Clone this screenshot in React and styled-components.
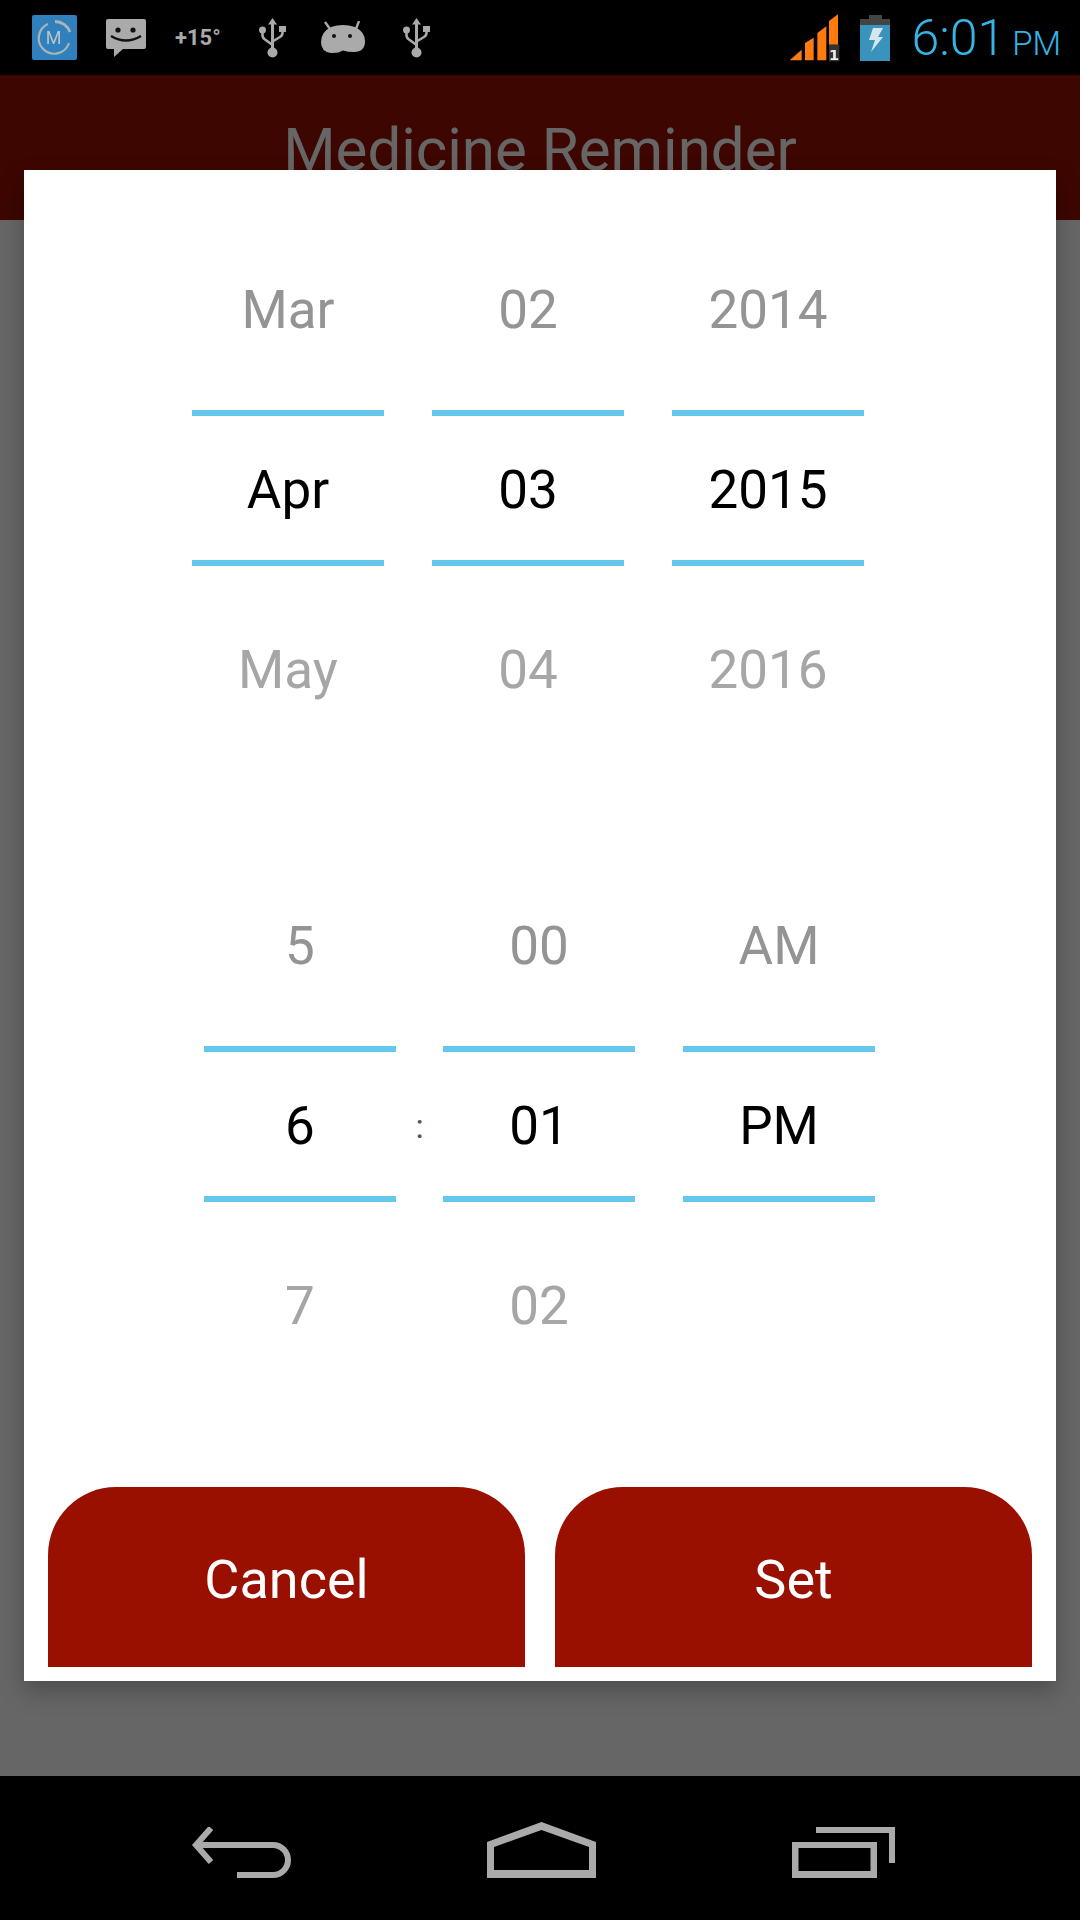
import React from 'react';
import styled, { createGlobalStyle } from 'styled-components';

const GlobalStyle = createGlobalStyle`
    html, body {
        margin: 0;
        padding: 0;
        background: #000;
        font-family: Roboto, "Liberation Sans", sans-serif;
    }
`;

const Page = styled.div`
    display: flex;
    flex-direction: column;
    width: 1080px;
    height: 1920px;
    overflow: hidden;
`;

const StatusBar = styled.div`
    display: flex;
    justify-content: space-between;
    align-items: center;
    height: 75px;
    padding: 0 19px 0 32px;
    box-sizing: border-box;
    background: #000;
`;

const StatusGroup = styled.div`
    display: flex;
    align-items: center;
`;

const StatusIcon = styled.svg`
    display: block;
    flex: none;
    margin-right: ${(p) => p.$gap || 0}px;
    filter: blur(0.5px);
`;

const Temp = styled.div`
    width: 46px;
    margin-right: 38px;
    color: #aaa;
    font-size: 22px;
    font-weight: bold;
    white-space: nowrap;
`;

const Clock = styled.div`
    display: flex;
    align-items: baseline;
    margin-left: 21px;
    padding-top: 7px;
    color: #33b5e5;
    font-size: 50px;
    font-weight: 300;
    line-height: 50px;
`;

const ClockSuffix = styled.span`
    margin-left: 7px;
    font-size: 33px;
`;

const Main = styled.div`
    position: relative;
    flex: 1;
    background: #fff;
`;

const ActionBar = styled.div`
    display: flex;
    justify-content: center;
    align-items: center;
    height: 145px;
    padding-top: 4px;
    box-sizing: border-box;
    background: #9a1000;
    color: #fff;
    font-size: 60px;
`;

const Scrim = styled.div`
    position: absolute;
    inset: 0;
    background: rgba(0, 0, 0, 0.6);
`;

const Dialog = styled.div`
    position: absolute;
    top: 95px;
    left: 24px;
    display: flex;
    flex-direction: column;
    width: 1032px;
    height: 1511px;
    padding: 50px 24px 14px;
    box-sizing: border-box;
    background: #fff;
    box-shadow: 0 10px 22px rgba(0, 0, 0, 0.25);
`;

const PickerRow = styled.div`
    display: flex;
    justify-content: center;
    align-items: center;
    margin-bottom: ${(p) => p.$below}px;
    padding-right: ${(p) => p.$inset || 0}px;
`;

const Column = styled.div`
    display: flex;
    flex-direction: column;
    width: 192px;
    margin-right: ${(p) => p.$gap || 0}px;
`;

const Cell = styled.div`
    display: flex;
    justify-content: center;
    align-items: center;
    height: 180px;
    color: ${(p) => p.$color || '#9b9b9b'};
    font-size: 53px;
`;

const SelectedCell = styled(Cell)`
    height: 156px;
    margin: 10px 0 14px;
    padding-top: 4px;
    border-top: 6px solid #66c7ec;
    border-bottom: 6px solid #66c7ec;
    box-sizing: border-box;
    color: #000;
`;

const Colon = styled.div`
    width: 47px;
    color: #555;
    font-size: 34px;
    text-align: center;
`;

const ButtonRow = styled.div`
    display: flex;
    gap: 30px;
    margin-top: auto;
`;

const Button = styled.button`
    flex: 1;
    height: 180px;
    padding: 4px 0 0;
    border: 0;
    border-radius: 68px 68px 0 0;
    background: #9a1000;
    color: #fff;
    font-family: inherit;
    font-size: 54px;
`;

const NavBar = styled.div`
    display: flex;
    justify-content: center;
    align-items: flex-end;
    gap: 196px;
    height: 144px;
    padding: 0 0 42px 5px;
    box-sizing: border-box;
    background: #000;
`;

const NavIcon = styled.svg`
    display: block;
    flex: none;
    fill: #aaa;
`;

const AppIcon = () => (
    <StatusIcon $gap={29} width="45" height="45" viewBox="0 0 45 45">
        <rect width="45" height="45" rx="2" fill="#2f80bd" />
        <path d="M16 9 A15.500 15.500 0 1 0 37 28" fill="none" stroke="#a9b4b8" strokeWidth="2.200" />
        <path d="M23 6.500 A16 16 0 0 1 38 17" fill="none" stroke="#a9b4b8" strokeWidth="3" />
        <text x="21.500" y="29" textAnchor="middle" fontSize="18" fill="#b8c4ca" fontFamily="Roboto">M</text>
    </StatusIcon>
);

const ChatIcon = () => (
    <StatusIcon $gap={29} width="40" height="38" viewBox="0 0 40 38">
        <path d="M2 0 H38 Q40 0 40 2 V28 Q40 30 38 30 H17 L8 38 V30 H2 Q0 30 0 28 V2 Q0 0 2 0 Z" fill="#aaa" />
        <circle cx="12" cy="11" r="2.600" fill="#111" />
        <circle cx="27" cy="11" r="2.600" fill="#111" />
        <path d="M5 17 Q20 26 35 17" fill="none" stroke="#111" strokeWidth="2.600" />
    </StatusIcon>
);

const UsbIcon = ({ gap }) => (
    <StatusIcon $gap={gap} width="27" height="40" viewBox="0 0 27 40">
        <path d="M13.500 0 L18 6.500 H15 V30 H12 V6.500 H9 Z" fill="#aaa" />
        <circle cx="13.500" cy="34.500" r="5" fill="#aaa" />
        <circle cx="3.500" cy="12" r="3.500" fill="#aaa" />
        <path d="M3.500 13 V17 Q3.500 20 6 21.500 L13.500 27" fill="none" stroke="#aaa" strokeWidth="2.600" />
        <rect x="20" y="8" width="7" height="6" fill="#aaa" />
        <path d="M23.500 13 V15 Q23.500 17.500 21 19 L13.500 23.500" fill="none" stroke="#aaa" strokeWidth="2.600" />
    </StatusIcon>
);

const RobotIcon = () => (
    <StatusIcon $gap={38} width="44" height="33" viewBox="0 0 44 33">
        <path d="M4 1 L9 8 M38 0 L35 8" stroke="#aaa" strokeWidth="2.400" />
        <path d="M10 6 Q22 2 34 6 Q44 11 44 20 Q44 31 33 31 Q27 31 22 29.500 Q17 32.500 10 32 Q0 31 0 21 Q0 11 10 6 Z" fill="#aaa" />
        <circle cx="13" cy="15" r="2" fill="#111" />
        <circle cx="29" cy="15" r="2" fill="#111" />
    </StatusIcon>
);

const SignalIcon = () => (
    <StatusIcon $gap={20} width="51" height="49" viewBox="150 40 153 147">
        <path d="M152 182 L188 150 V182 Z" fill="#ff7a0f" />
        <path d="M198 182 V130 L224 114 V182 Z" fill="#ff7a0f" />
        <path d="M235 182 V100 L262 80 V182 Z" fill="#ff7a0f" />
        <path d="M270 135 V64 L297 44 V135 Z" fill="#ff7a0f" />
        <rect x="270" y="135" width="31" height="50" fill="#333" />
        <text x="285" y="180" textAnchor="middle" fontSize="44" fontWeight="bold" fill="#eee" fontFamily="DejaVu Sans">1</text>
    </StatusIcon>
);

const BatteryIcon = () => (
    <StatusIcon width="30" height="46" viewBox="0 0 30 46">
        <rect x="9" y="0" width="13" height="5" fill="#444" />
        <rect x="0" y="4" width="30" height="6" fill="#444" />
        <rect x="0" y="10" width="30" height="36" fill="#3a93bd" />
        <path d="M13 13 H23 L18 22 H23 L11 37 L15 25 H9 Z" fill="#d5e6ee" />
    </StatusIcon>
);

const BackIcon = () => (
    <NavIcon width="100" height="51" viewBox="0 0 100 51">
        <path d="M20 1 L5 18 L20 35 M5 18 H82 A15 15 0 0 1 82 48 H46" fill="none" stroke="#aaa" strokeWidth="6" />
    </NavIcon>
);

const HomeIcon = () => (
    <NavIcon width="109" height="56" viewBox="0 0 109 56">
        <path fillRule="evenodd" d="M0 20 L54.500 0 L109 20 V56 H0 Z M7 25 V48 H102 V25 L54.500 8 Z" />
    </NavIcon>
);

const RecentsIcon = () => (
    <NavIcon width="103" height="51" viewBox="0 0 103 51">
        <path d="M24 0 H103 V36 H97 V6 H24 Z" />
        <path fillRule="evenodd" d="M0 15 H85 V51 H0 Z M6.500 21 V44 H78.500 V21 Z" />
    </NavIcon>
);

const Picker = ({ values, gap }) => (
    <Column $gap={gap}>
        <Cell $color="#949494">{values[0]}</Cell>
        <SelectedCell>{values[1]}</SelectedCell>
        <Cell $color="#a6a6a6">{values[2]}</Cell>
    </Column>
);

const App = () => {
    return (
        <Page>
            <GlobalStyle />
            <StatusBar>
                <StatusGroup>
                    <AppIcon />
                    <ChatIcon />
                    <Temp>+15°</Temp>
                    <UsbIcon gap={35} />
                    <RobotIcon />
                    <UsbIcon />
                </StatusGroup>
                <StatusGroup>
                    <SignalIcon />
                    <BatteryIcon />
                    <Clock>
                        6:01
                        <ClockSuffix>PM</ClockSuffix>
                    </Clock>
                </StatusGroup>
            </StatusBar>
            <Main>
                <ActionBar>Medicine Reminder</ActionBar>
                <Scrim />
                <Dialog>
                    <PickerRow $below={96} $inset={24}>
                        <Picker values={['Mar', 'Apr', 'May']} gap={48} />
                        <Picker values={['02', '03', '04']} gap={48} />
                        <Picker values={['2014', '2015', '2016']} />
                    </PickerRow>
                    <PickerRow $below={0} $inset={1}>
                        <Picker values={['5', '6', '7']} />
                        <Colon>:</Colon>
                        <Picker values={['00', '01', '02']} gap={48} />
                        <Picker values={['AM', 'PM', '']} />
                    </PickerRow>
                    <ButtonRow>
                        <Button>Cancel</Button>
                        <Button>Set</Button>
                    </ButtonRow>
                </Dialog>
            </Main>
            <NavBar>
                <BackIcon />
                <HomeIcon />
                <RecentsIcon />
            </NavBar>
        </Page>
    );
};

export default App;
